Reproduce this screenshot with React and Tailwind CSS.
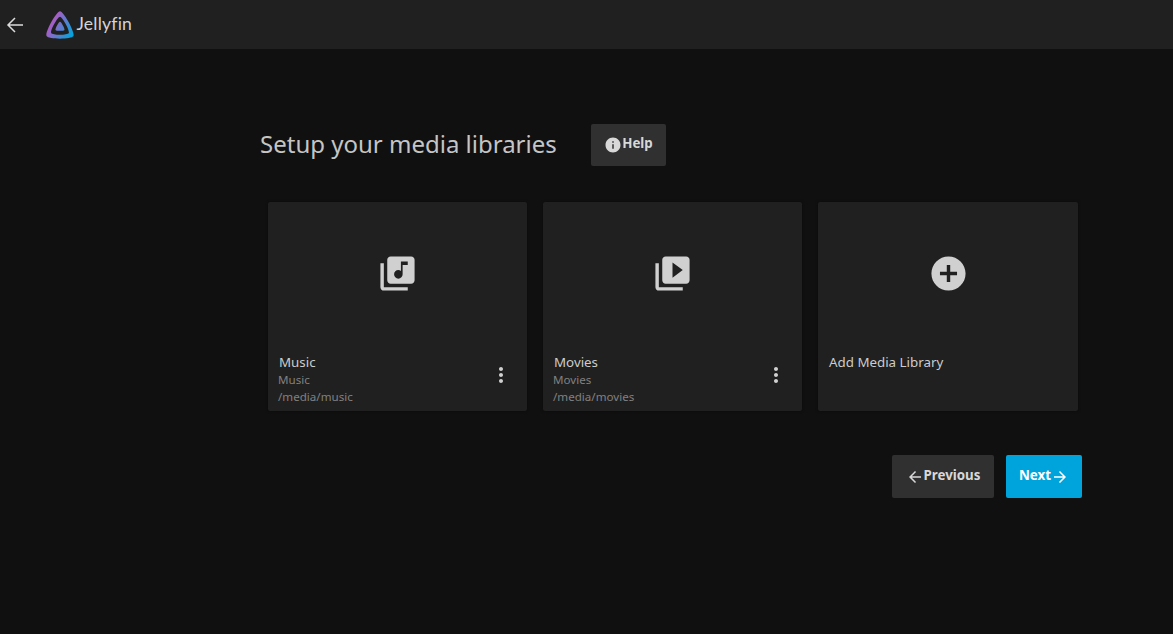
import React from 'react'

const icons = {
  back: 'M20 11H7.83l5.59-5.59L12 4l-8 8 8 8 1.41-1.41L7.83 13H20v-2z',
  forward: 'M12 4l-1.41 1.41L16.17 11H4v2h12.17l-5.58 5.59L12 20l8-8z',
  info: 'M12 2C6.48 2 2 6.48 2 12s4.48 10 10 10 10-4.48 10-10S17.52 2 12 2zm1 15h-2v-6h2v6zm0-8h-2V7h2v2z',
  music: 'M20 2H8c-1.1 0-2 .9-2 2v12c0 1.1.9 2 2 2h12c1.1 0 2-.9 2-2V4c0-1.1-.9-2-2-2zm-2 5h-3v5.5c0 1.38-1.12 2.5-2.5 2.5S10 13.88 10 12.5s1.12-2.5 2.5-2.5c.57 0 1.08.19 1.5.51V5h4v2zM4 6H2v14c0 1.1.9 2 2 2h14v-2H4V6z',
  video: 'M4 6H2v14c0 1.1.9 2 2 2h14v-2H4V6zm16-4H8c-1.1 0-2 .9-2 2v12c0 1.1.9 2 2 2h12c1.1 0 2-.9 2-2V4c0-1.1-.9-2-2-2zm-8 12.5v-9l6 4.5-6 4.5z',
  add: 'M12 2C6.48 2 2 6.48 2 12s4.48 10 10 10 10-4.48 10-10S17.52 2 12 2zm5 11h-4v4h-2v-4H7v-2h4V7h2v4h4v2z',
  more: 'M12 8c1.1 0 2-.9 2-2s-.9-2-2-2-2 .9-2 2 .9 2 2 2zm0 2c-1.1 0-2 .9-2 2s.9 2 2 2 2-.9 2-2-.9-2-2-2zm0 6c-1.1 0-2 .9-2 2s.9 2 2 2 2-.9 2-2-.9-2-2-2z',
}

function Icon({ name, className }) {
  return (
    <svg viewBox="0 0 24 24" fill="currentColor" className={className}>
      <path d={icons[name]} />
    </svg>
  )
}

function Logo() {
  return (
    <svg viewBox="0 0 512 512" className="w-[30px] h-[30px] shrink-0">
      <defs>
        <linearGradient id="jf" gradientUnits="userSpaceOnUse" x1="110" y1="219" x2="470" y2="427">
          <stop offset="0" stopColor="#aa5cc3" />
          <stop offset="1" stopColor="#00a4dc" />
        </linearGradient>
      </defs>
      <path fill="url(#jf)" d="M256 201.1c-20.4 0-86.2 119.3-76.2 139.4s142.5 19.9 152.4 0S276.5 201 256 201z" />
      <path fill="url(#jf)" d="M256 23.3c-61.6 0-259.8 359.4-229.6 420.1s429.3 60 459.2 0S317.6 23.3 256 23.3zM406.5 390.8c-19.6 39.3-281.1 39.8-300.9 0S215.6 115.9 256 115.9s170.1 235.7 150.5 274.9z" />
    </svg>
  )
}

function LibraryCard({ icon, title, type, path, menu }) {
  return (
    <div className="h-[209px] rounded-[2px] bg-[#202020] shadow-[0_0_3px_rgba(0,0,0,0.4)] flex flex-col">
      <div className="h-[142px] flex items-center justify-center shrink-0">
        <Icon name={icon} className="w-[41px] h-[41px] text-[#d0d0d0]" />
      </div>
      <div className="flex items-start justify-between pl-[11px] pr-[14px]">
        <div className="min-w-0">
          <div className="text-[13.33px] leading-[18px] text-[#cccccc] mt-[9px]">{title}</div>
          {type && <div className="text-[11.6px] leading-[17px] text-[#808080] -ml-px">{type}</div>}
          {path && <div className="text-[11.6px] leading-[17px] text-[#808080] -ml-px">{path}</div>}
        </div>
        {menu && <Icon name="more" className="w-[24px] h-[24px] text-[#d0d0d0] mt-[19px]" />}
      </div>
    </div>
  )
}

export default function App() {
  return (
    <div className="min-h-[634px] bg-[#101010] font-['Noto_Sans',sans-serif] overflow-hidden">
      <header className="h-[49px] bg-[#202020] flex items-center pl-1">
        <svg viewBox="0 0 24 24" fill="none" stroke="currentColor" strokeWidth="1.5" className="w-[24px] h-[24px] text-[#dcdcdc]">
          <path d="M19 12H4.5M11 5l-7 7 7 7" />
        </svg>
        <div className="flex items-center ml-[16.5px]">
          <Logo />
          <span className="ml-[2px] font-['Lato',sans-serif] text-[17.6px] tracking-[0.2px] text-[#d4d4d4]">Jellyfin</span>
        </div>
      </header>

      <main className="pl-[260px] pr-[91px]">
        <div className="flex items-center mt-[75px] h-[42px]">
          <h1 className="text-[24px] text-[#c5c5c5] w-[331px] -mt-[2px]">Setup your media libraries</h1>
          <button className="h-[42px] w-[75px] bg-[#303030] rounded-[2px] flex items-center justify-center text-[13.33px] font-bold text-[#d8d8d8]">
            <Icon name="info" className="w-[18px] h-[18px]" />
            <span className="-mt-[2px]">Help</span>
          </button>
        </div>

        <div className="grid grid-cols-[259px_259px_260px] gap-x-[16px] mt-[36px] ml-[8px]">
          <LibraryCard icon="music" title="Music" type="Music" path="/media/music" menu />
          <LibraryCard icon="video" title="Movies" type="Movies" path="/media/movies" menu />
          <LibraryCard icon="add" title="Add Media Library" />
        </div>

        <div className="flex justify-end gap-x-[12px] mt-[44px]">
          <button className="h-[43px] w-[102px] bg-[#303030] rounded-[2px] flex items-center justify-center text-[13.33px] font-bold text-[#d8d8d8]">
            <Icon name="back" className="w-[18px] h-[18px]" />
            <span className="-mt-[2px]">Previous</span>
          </button>
          <button className="h-[43px] w-[76px] bg-[#00a4dc] rounded-[2px] flex items-center justify-center text-[13.33px] font-bold text-white">
            <span className="-mt-[2px]">Next</span>
            <Icon name="forward" className="w-[18px] h-[18px]" />
          </button>
        </div>
      </main>
    </div>
  )
}
